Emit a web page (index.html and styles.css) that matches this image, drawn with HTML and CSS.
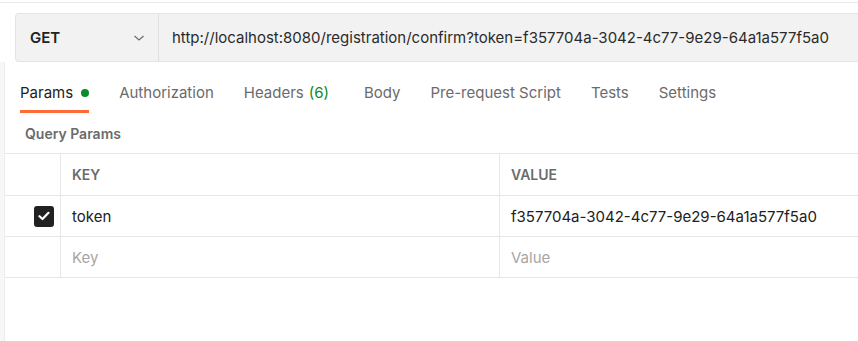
FILE: index.html
```html
<!DOCTYPE html>
<html lang="en">
<head>
<meta charset="UTF-8" />
<meta name="viewport" content="width=device-width, initial-scale=1" />
<title>Request</title>
<link rel="stylesheet" href="styles.css">
</head>
<body>
  <div class="top-rule"></div>

  <div class="request">
    <div class="method">
      <span>GET</span>
      <svg class="chevron" width="12" height="8" viewBox="0 0 12 8">
        <polyline points="1.5,2 6,6 10.5,2" fill="none" stroke="#6b6b6b" stroke-width="1.2" />
      </svg>
    </div>
    <div class="url">http://localhost:8080/registration/confirm?token=f357704a-3042-4c77-9e29-64a1a577f5a0</div>
  </div>

  <div class="workspace">
    <div class="gutter"></div>
    <div class="pane">
      <div class="tabs">
        <div class="tab active">Params <span class="dot"></span></div>
        <div class="tab">Authorization</div>
        <div class="tab">Headers <span class="count">(6)</span></div>
        <div class="tab">Body</div>
        <div class="tab">Pre-request Script</div>
        <div class="tab">Tests</div>
        <div class="tab">Settings</div>
      </div>

      <div class="section-title">Query Params</div>

      <div class="params">
        <div class="cell head"></div>
        <div class="cell head">KEY</div>
        <div class="cell head">VALUE</div>

        <div class="cell check-cell">
          <span class="checkbox">
            <svg width="12" height="10" viewBox="0 0 12 10">
              <polyline points="1.5,5.2 4.5,8 10.5,1.8" fill="none" stroke="#fff" stroke-width="2.2" stroke-linecap="round" stroke-linejoin="round" />
            </svg>
          </span>
        </div>
        <div class="cell">token</div>
        <div class="cell">f357704a-3042-4c77-9e29-64a1a577f5a0</div>

        <div class="cell"></div>
        <div class="cell placeholder">Key</div>
        <div class="cell placeholder">Value</div>
      </div>
    </div>
  </div>
</body>
</html>
```

FILE: styles.css
```css
body {
  margin: 0;
  background-color: #fff;
  font-family: Inter, "Noto Sans", sans-serif;
  font-size: 15px;
  color: #212121;
  height: 341px;
  overflow: hidden;
}
.top-rule {
  height: 2px;
  border-bottom: 1px solid #e8e8e8;
}
.request {
  display: flex;
  height: 47px;
  margin: 10px 0 0 15px;
  background-color: #f2f2f2;
  border: 1px solid #e4e4e4;
  border-right: none;
  border-radius: 4px 0 0 4px;
}
.method {
  width: 143px;
  box-sizing: border-box;
  padding: 0 13px 0 14px;
  display: flex;
  align-items: center;
  justify-content: space-between;
  font-weight: 600;
  color: #212121;
  border-right: 1px solid #e0e0e0;
}
.url {
  display: flex;
  align-items: center;
  padding-left: 13px;
  white-space: nowrap;
  color: #2b2b2b;
}
.workspace {
  display: flex;
  height: 280px;
}
.gutter {
  width: 4px;
  background-color: #f7f7f7;
  border-right: 1px solid #ececec;
}
.pane {
  flex: 1;
  min-width: 0;
}
.tabs {
  display: flex;
  gap: 30px;
  padding-left: 15px;
}
.tab {
  padding: 21px 0 7px;
  line-height: 20px;
  color: #6b6b6b;
  border-bottom: 3px solid transparent;
  white-space: nowrap;
  display: flex;
  align-items: center;
}
.tab.active {
  color: #212121;
  border-bottom-color: #ff6c37;
}
.dot {
  display: inline-block;
  width: 8px;
  height: 8px;
  margin-left: 8px;
  border-radius: 50%;
  background-color: #0b8a2e;
}
.count {
  color: #0b8a2e;
  margin-left: 5px;
  padding-right: 5px;
}
.section-title {
  padding: 11px 0 9px 20px;
  line-height: 20px;
  font-size: 14px;
  font-weight: 600;
  color: #6b6b6b;
}
.params {
  display: grid;
  grid-template-columns: 55px 439px 1fr;
  border-top: 1px solid #e6e6e6;
}
.cell {
  height: 40px;
  display: flex;
  align-items: center;
  padding-left: 11px;
  border-bottom: 1px solid #e6e6e6;
  border-left: 1px solid #e6e6e6;
  white-space: nowrap;
}
.cell:nth-child(3n+1) {
  border-left: none;
  padding-left: 0;
}
.head {
  height: 41px;
  font-size: 14px;
  font-weight: 600;
  color: #6b6b6b;
}
.check-cell {
  justify-content: flex-end;
  padding-right: 6px;
}
.checkbox {
  width: 20px;
  height: 21px;
  border-radius: 3px;
  background-color: #212121;
  display: flex;
  align-items: center;
  justify-content: center;
}
.placeholder {
  color: #a6a6a6;
}
```
